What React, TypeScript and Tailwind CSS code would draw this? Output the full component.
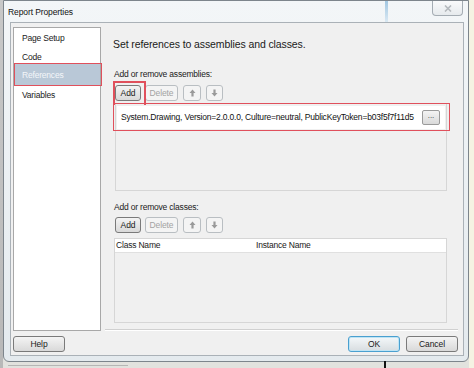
import React from "react";

const F = { fontFamily: '"Liberation Sans", Arial, sans-serif' };

function Btn({ children, w, disabled, primary }: { children: React.ReactNode; w: string; disabled?: boolean; primary?: boolean }) {
  const base = "h-[16px] rounded-[3px] flex items-center justify-center text-[8.5px] tracking-[-0.1px] leading-none shrink-0 ";
  const cls = disabled
    ? "border border-[#b9bec2] bg-[#f4f4f4] text-[#a3a3a3]"
    : primary
    ? "border border-[#4aa0d0] bg-gradient-to-b from-[#f4f8fa] to-[#d8dde0] text-[#1a1a1a] shadow-[inset_0_0_0_1px_#bfe4f4]"
    : "border border-[#7a7a7a] bg-gradient-to-b from-[#f4f4f4] to-[#d9d9d9] text-[#1a1a1a]";
  return <div className={base + cls + " " + w}>{children}</div>;
}

function Arrow({ up }: { up?: boolean }) {
  return (
    <svg width="7" height="8" viewBox="0 0 7 8" style={{ transform: up ? undefined : "rotate(180deg)" }}>
      <path d="M3.5 0.5 L6.5 4 L4.6 4 L4.6 7.5 L2.4 7.5 L2.4 4 L0.5 4 Z" fill="#9a9a9a" />
    </svg>
  );
}

function Toolbar() {
  return (
    <div className="flex items-center ml-[3px]">
      <Btn w="w-[26px]">Add</Btn>
      <div className="w-[4px]" />
      <Btn w="w-[33px]" disabled>Delete</Btn>
      <div className="w-[5px]" />
      <Btn w="w-[18px]" disabled>
        <Arrow up />
      </Btn>
      <div className="w-[5px]" />
      <Btn w="w-[17px]" disabled>
        <Arrow />
      </Btn>
    </div>
  );
}

const small = "text-[8.5px] tracking-[-0.2px]";

export default function App() {
  return (
    <div className="w-[474px] h-[368px] relative overflow-hidden bg-[#e2e2de] flex items-start" style={F}>
      {/* left backdrop strip */}
      <div className="w-[3px] h-full bg-gradient-to-b from-[#c8c8c8] to-[#b8b8b8]" />
      {/* window */}
      <div className="w-[466px] h-[362px] border border-[#7d858c] rounded-b-[6px] bg-gradient-to-b from-[#f3f6f8] to-[#e4eaee] flex flex-col relative">
        {/* title bar */}
        <div className="h-[21px] flex items-start relative">
          <div className="pl-[4px] pt-[5px] text-[8.5px] tracking-[-0.1px] leading-[12px] text-[#111]">Report Properties</div>
          <div className="absolute left-[381px] top-0 w-[3px] h-[21px] bg-gradient-to-b from-[#7fb3d8] to-[#cfe3f1] opacity-70" />
          <div className="ml-auto mr-[5px] w-[31px] h-[15px] border border-t-0 border-[#a4acb3] rounded-b-[4px] bg-gradient-to-b from-[#f9fafb] to-[#e6eaed] flex items-center justify-center">
            <svg width="8" height="7" viewBox="0 0 8 7">
              <path d="M1 0.5 L7 6.5 M7 0.5 L1 6.5" stroke="#b4b9bd" strokeWidth="1.6" />
            </svg>
          </div>
        </div>
        {/* client */}
        <div className="ml-[6px] w-[454px] h-[334px] border border-[#aab1b7] bg-[#f0f0f0] flex flex-col">
          <div className="flex">
            {/* nav */}
            <div className={"ml-[2px] mt-[4px] w-[88px] h-[304px] border border-[#a8a8a8] bg-white pt-[1px] text-[#1a1a1a] relative " + small}>
              <div className="h-[19px] flex items-center pl-[8px]">Page Setup</div>
              <div className="h-[16px] flex items-center pl-[8px] pt-[2px]">Code</div>
              <div className="h-[22px] flex items-center pl-[8px] bg-[#b9c8d7] text-[#f4f6f9]">References</div>
              <div className="h-[19px] flex items-center pl-[8px]">Variables</div>
              <div className="absolute left-0 top-[35px] w-[88px] h-[23px] border-[1.5px] border-[#e0505c]" />
            </div>
            {/* right content */}
            <div className="flex-1 flex flex-col pl-[12px] relative">
              <div className="mt-[14px] h-[16px] flex items-center text-[10.5px] tracking-[-0.1px] text-[#1a1a1a]">
                Set references to assemblies and classes.
              </div>
              <div className={"mt-[15px] ml-[1px] h-[12px] flex items-center text-[#1a1a1a] " + small}>Add or remove assemblies:</div>
              <div className="mt-[5px] -ml-[1px]">
                <Toolbar />
              </div>
              <div className="mt-[2px] ml-[2px] w-[332px] h-[88px] border border-[#d6d6d6] bg-[#f0f0f0] pt-[2px] px-[1px]">
                <div className="h-[23px] bg-white flex items-center">
                  <div className={"pl-[4px] w-[298px] whitespace-nowrap text-[#111] " + small}>
                    System.Drawing, Version=2.0.0.0, Culture=neutral, PublicKeyToken=b03f5f7f11d5
                  </div>
                  <div className="ml-[7px] w-[18px] h-[15px] rounded-[2px] border border-[#9a9a9a] bg-gradient-to-b from-[#f4f4f4] to-[#d9d9d9] flex items-end justify-center pb-[4px] text-[8px] leading-none text-[#333]">
                    ...
                  </div>
                </div>
              </div>
              <div className={"mt-[10px] ml-[1px] h-[12px] flex items-center text-[#1a1a1a] " + small}>Add or remove classes:</div>
              <div className="mt-[4px] -ml-[1px]">
                <Toolbar />
              </div>
              <div className="mt-[5px] ml-[1px] w-[333px] h-[85px] border border-[#d6d6d6] bg-[#f0f0f0] flex flex-col">
                <div className={"h-[14px] bg-white border-b border-[#e0e0e0] flex items-center text-[#1a1a1a] " + small}>
                  <div className="pl-[1px] w-[141px]">Class Name</div>
                  <div>Instance Name</div>
                </div>
              </div>
              {/* red overlays */}
              <div className="absolute left-[12px] top-[58px] w-[33px] h-[24px] border-2 border-b-0 border-[#e0505c]" />
              <div className="absolute left-[12px] top-[80px] w-[337px] h-[28px] border-[1.5px] border-[#e0505c]" />
            </div>
          </div>
          {/* separator */}
          <div className="ml-[94px] mr-[5px] mt-[-2px] h-[2px] border-t border-[#d0d0d0] border-b border-b-white" />
          {/* bottom buttons */}
          <div className="mt-[5px] flex items-center px-[2px] pr-[5px]">
            <Btn w="w-[52px]">Help</Btn>
            <div className="flex-1" />
            <Btn w="w-[52px]" primary>OK</Btn>
            <div className="w-[6px]" />
            <Btn w="w-[52px]">Cancel</Btn>
          </div>
        </div>
      </div>
      {/* right backdrop strip */}
      <div className="flex-1 h-full bg-[#f5f3e3]" />
      <div className="absolute left-[384px] top-[361px] w-[2px] h-[7px] bg-[#111]" />
      <div className="absolute left-[8px] top-[365px] w-[120px] h-[1px] bg-[#9a9a9a] opacity-60" />
    </div>
  );
}
